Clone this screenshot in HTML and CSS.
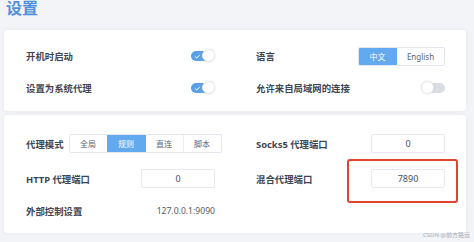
FILE: index.html
```html
<!DOCTYPE html>
<html lang="zh-CN">
<head>
<meta charset="utf-8">
<title>设置</title>
<link rel="stylesheet" href="styles.css">
</head>
<body>
<div class="page">
  <h1 class="title">设置</h1>

  <section class="card card-basic">
    <div class="row">
      <span class="label">开机时启动</span>
      <span class="switch on"><span class="track"><svg class="check" viewBox="0 0 10 10" width="7" height="7"><path d="M2 5.2 L4.2 7.2 L8 2.8" fill="none" stroke="#fff" stroke-width="1.4" stroke-linecap="round" stroke-linejoin="round"/></svg></span><span class="knob"></span></span>
    </div>
    <div class="row">
      <span class="label">语言</span>
      <span class="seg seg-lang"><span class="seg-item active">中文</span><span class="seg-item wide">English</span></span>
    </div>
    <div class="row">
      <span class="label">设置为系统代理</span>
      <span class="switch on"><span class="track"><svg class="check" viewBox="0 0 10 10" width="7" height="7"><path d="M2 5.2 L4.2 7.2 L8 2.8" fill="none" stroke="#fff" stroke-width="1.4" stroke-linecap="round" stroke-linejoin="round"/></svg></span><span class="knob"></span></span>
    </div>
    <div class="row">
      <span class="label">允许来自局域网的连接</span>
      <span class="switch off"><span class="track"></span><span class="knob"></span></span>
    </div>
  </section>

  <section class="card card-proxy">
    <div class="row row-start">
      <span class="label">代理模式</span>
      <span class="seg seg-mode"><span class="seg-item">全局</span><span class="seg-item active">规则</span><span class="seg-item">直连</span><span class="seg-item">脚本</span></span>
    </div>
    <div class="row">
      <span class="label">Socks5 代理端口</span>
      <span class="input">0</span>
    </div>
    <div class="row">
      <span class="label">HTTP 代理端口</span>
      <span class="input">0</span>
    </div>
    <div class="row">
      <span class="label">混合代理端口</span>
      <span class="input highlighted">7890<span class="mark"></span></span>
    </div>
    <div class="row">
      <span class="label">外部控制设置</span>
      <span class="value">127.0.0.1:9090</span>
    </div>
    <div class="row"></div>
  </section>

  <div class="watermark">CSDN @前方路远</div>
</div>
</body>
</html>
```

FILE: styles.css
```css
html, body {
  margin: 0;
  padding: 0;
  background: #f3f4f8;
}

body {
  font-family: "Noto Sans", "Noto Sans CJK SC", sans-serif;
  width: 474px;
  height: 242px;
  overflow: hidden;
}

.page {
  position: relative;
  height: 242px;
  padding: 0 8px 0 4px;
  box-sizing: border-box;
}

.title {
  margin: -1px 0 0 2px;
  height: 31px;
  font-size: 16px;
  line-height: 16px;
  font-weight: 700;
  color: #4f8fdc;
  font-family: "Noto Sans CJK SC", sans-serif;
}

.card {
  background: #ffffff;
  border-radius: 3px;
  box-shadow: 0 0 3px rgba(180, 186, 200, 0.25);
  display: grid;
  grid-template-columns: 1fr 1fr;
  column-gap: 41px;
  padding: 0 21px 0 22px;
  box-sizing: border-box;
}

.card-basic {
  height: 81px;
  padding-top: 10px;
  padding-bottom: 7px;
  grid-template-rows: 32px 32px;
  margin-bottom: 4px;
}

.card-proxy {
  height: 118px;
  padding-top: 19px;
  padding-bottom: 15px;
  grid-template-rows: 19px 19px 14px;
  row-gap: 16px;
}

.row {
  display: flex;
  align-items: center;
  justify-content: space-between;
  min-width: 0;
}

.row-start {
  justify-content: flex-start;
  gap: 5px;
}

.label {
  font-family: "Noto Sans", "Noto Sans CJK SC", sans-serif;
  font-size: 9.4px;
  font-weight: 700;
  color: #3e4452;
  white-space: nowrap;
}

/* switch */
.switch {
  position: relative;
  width: 24px;
  height: 14px;
  display: inline-block;
  flex: none;
}
.switch .track {
  position: absolute;
  top: 2px;
  height: 10px;
  border-radius: 5px;
  display: flex;
  align-items: center;
}
.switch.on .track {
  left: 0;
  width: 20px;
  background: #5b9fe6;
}
.switch.on .check {
  margin-left: 3px;
}
.switch.off .track {
  right: 0;
  width: 20px;
  background: #dadde4;
}
.switch .knob {
  position: absolute;
  top: 0;
  width: 13px;
  height: 13px;
  border-radius: 50%;
  background: #ffffff;
  box-sizing: border-box;
  border: 1px solid #e6e9ef;
  box-shadow: 0 0 2px rgba(150, 160, 180, 0.35);
}
.switch.on .knob { right: 0; }
.switch.off .knob { left: 0; }

/* segmented */
.seg {
  display: flex;
  height: 19px;
  border: 1px solid #e3e6ec;
  border-radius: 2px;
  box-sizing: border-box;
  overflow: hidden;
  flex: none;
}
.seg-item {
  width: 37px;
  display: flex;
  align-items: center;
  justify-content: center;
  font-size: 8px;
  color: #5d6270;
  font-family: "Noto Sans", "Noto Sans CJK SC", sans-serif;
  border-left: 1px solid #eceef2;
}
.seg-item:first-child { border-left: none; }
.seg-item.active {
  background: #62a9ef;
  color: #ffffff;
  border-left-color: #62a9ef;
}
.seg-item.active + .seg-item { border-left-color: #62a9ef; }
.seg-lang .seg-item { width: 37px; }
.seg-lang .seg-item.wide { width: 47px; }

/* inputs */
.input {
  position: relative;
  width: 74px;
  height: 19px;
  box-sizing: border-box;
  border: 1px solid #e6e9ee;
  border-radius: 2px;
  display: flex;
  align-items: center;
  justify-content: center;
  font-size: 9px;
  color: #4a505e;
  flex: none;
}
.mark {
  position: absolute;
  left: -25px;
  right: -14px;
  top: -11px;
  bottom: -16px;
  border: 2px solid #e0432f;
  border-radius: 3px;
}

.value {
  font-size: 8.6px;
  color: #545a66;
  white-space: nowrap;
}

.watermark {
  position: absolute;
  right: 4px;
  bottom: 2px;
  font-size: 6px;
  color: #a9adb8;
  font-family: "Noto Sans", "Noto Sans CJK SC", sans-serif;
}
```
